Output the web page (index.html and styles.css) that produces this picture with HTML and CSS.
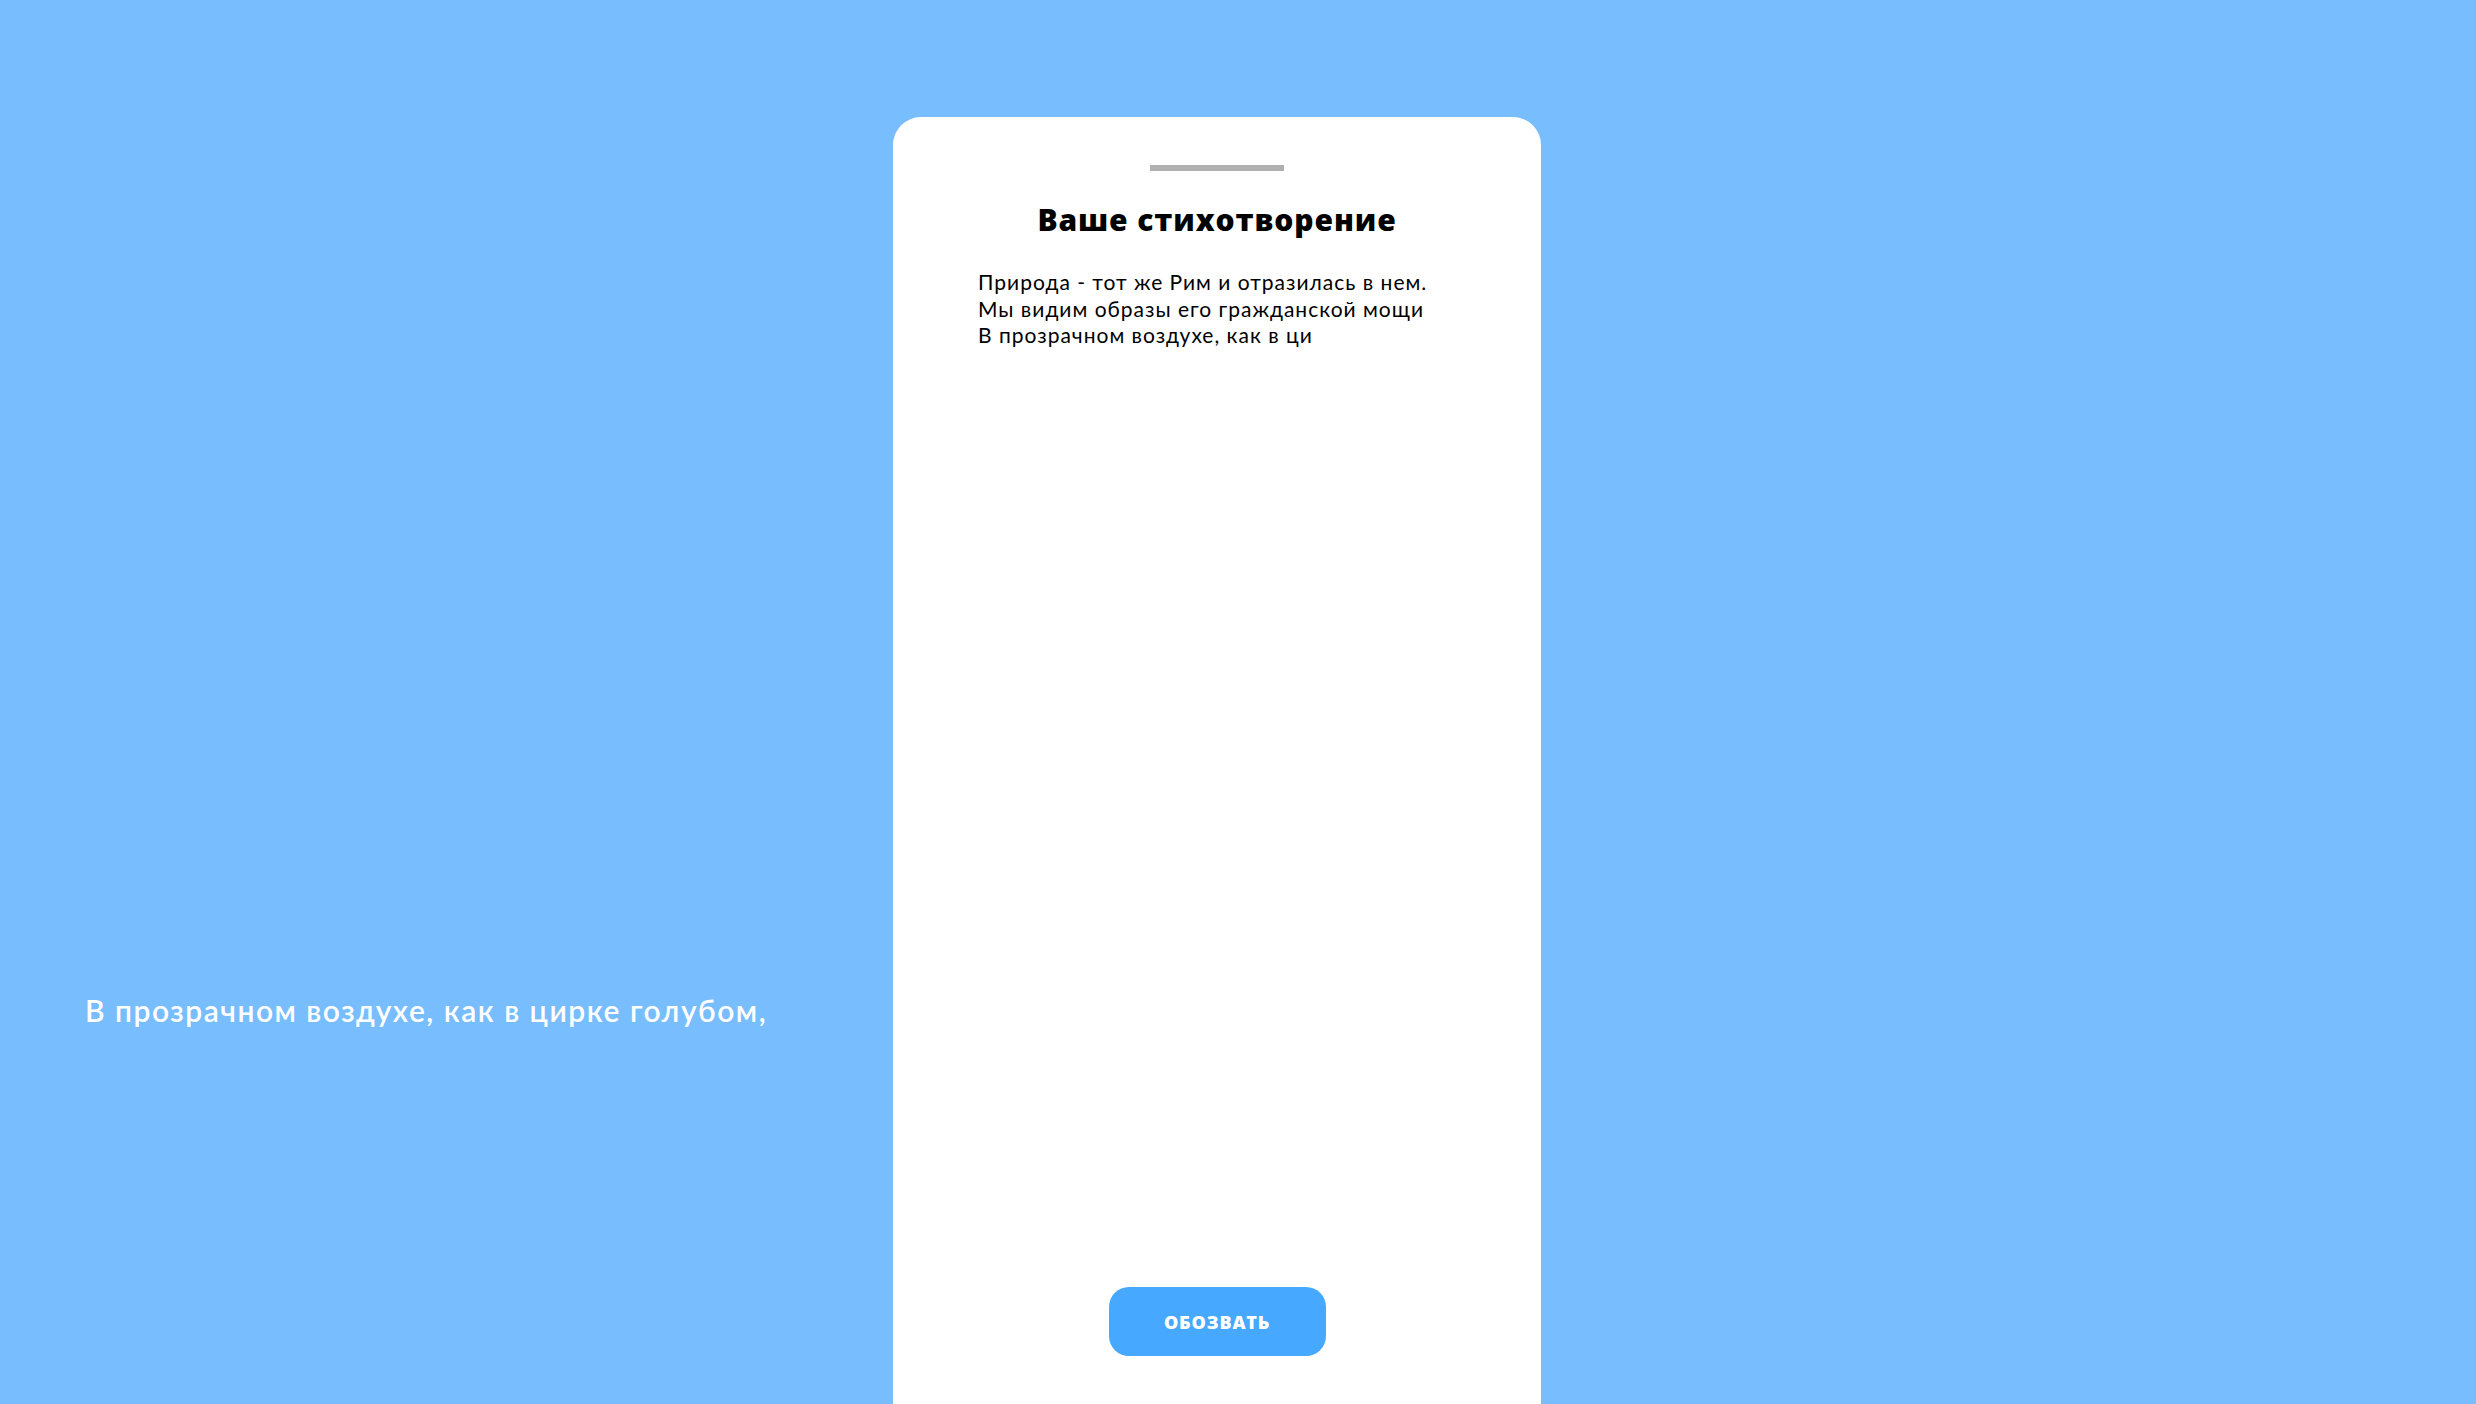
FILE: index.html
```html
<!DOCTYPE html>
<html lang="ru">
<head>
<meta charset="utf-8">
<title>Ваше стихотворение</title>
<link rel="stylesheet" href="styles.css">
</head>
<body>
<main class="stage">
  <section class="side">
    <p class="side-line">В прозрачном воздухе, как в цирке голубом,</p>
  </section>
  <section class="sheet">
    <div class="handle"></div>
    <h1 class="sheet-title">Ваше стихотворение</h1>
    <div class="poem">Природа - тот же Рим и отразилась в нем.<br>Мы видим образы его гражданской мощи<br>В прозрачном воздухе, как в ци</div>
    <button class="action" type="button">ОБОЗВАТЬ</button>
  </section>
  <section class="side-right"></section>
</main>
</body>
</html>
```

FILE: styles.css
```css
html, body {
  margin: 0;
  padding: 0;
  height: 100%;
  overflow: hidden;
}

body {
  background: #78bdfe;
  font-family: "Lato", "Noto Sans", sans-serif;
}

.stage {
  display: grid;
  grid-template-columns: 893px 648px 1fr;
  height: 1404px;
}

.side {
  padding: 984px 0 0 85px;
}

.side-line {
  margin: 0;
  color: #ffffff;
  font-size: 30px;
  font-weight: 600;
  line-height: 52px;
  letter-spacing: 1.5px;
  white-space: nowrap;
}

.sheet {
  margin-top: 117px;
  height: 1287px;
  box-sizing: border-box;
  background: #ffffff;
  border-radius: 28px 28px 0 0;
  display: flex;
  flex-direction: column;
  align-items: center;
  padding: 48px 0 48px;
}

.handle {
  width: 134px;
  height: 6px;
  background: #b0b0b0;
}

.sheet-title {
  margin: 30px 0 0;
  font-family: "Open Sans", "Noto Sans", sans-serif;
  font-size: 30px;
  font-weight: 800;
  line-height: 38px;
  color: #000000;
  letter-spacing: 0.9px;
}

.poem {
  align-self: stretch;
  margin: 30px 0 0 85px;
  font-size: 21px;
  line-height: 26.6px;
  letter-spacing: 1px;
  color: #000000;
}

.action {
  margin-top: auto;
  width: 217px;
  height: 69px;
  border: none;
  border-radius: 20px;
  background: #46a8ff;
  color: #ffffff;
  font-family: "Open Sans", "Noto Sans", sans-serif;
  font-size: 18px;
  font-weight: 800;
  letter-spacing: 0.8px;
  cursor: pointer;
}
```
